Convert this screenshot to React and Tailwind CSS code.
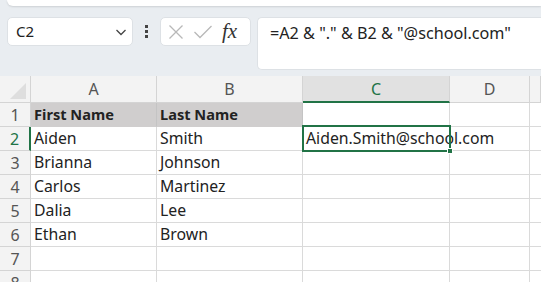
import React from "react";

const font = { fontFamily: '"Noto Sans", "Open Sans", sans-serif' };

const rows = [
  ["First Name", "Last Name", "", ""],
  ["Aiden", "Smith", "Aiden.Smith@school.com", ""],
  ["Brianna", "Johnson", "", ""],
  ["Carlos", "Martinez", "", ""],
  ["Dalia", "Lee", "", ""],
  ["Ethan", "Brown", "", ""],
  ["", "", "", ""],
  ["", "", "", ""],
];

export default function App() {
  return (
    <div className="w-[541px] h-[282px] overflow-hidden bg-white text-[#222]" style={font}>
      {/* Top toolbar area */}
      <div className="h-[76px] bg-[#e9edf1] flex flex-col">
        <div className="h-[6px] ml-[7px] bg-white rounded-bl-[6px] shadow-[0_1px_2px_rgba(0,0,0,0.12)]" />
        <div className="flex items-start mt-[11px] pl-[7px]">
          <div className="w-[126px] h-[29px] bg-white border border-[#dde1e5] rounded-[5px] flex items-center justify-between pl-[8px] pr-[4px]">
            <span className="text-[15px] text-[#222]">C2</span>
            <svg width="14" height="14" viewBox="0 0 14 14" className="mt-[1px]">
              <path d="M2.5 5 L7 9.5 L11.5 5" fill="none" stroke="#444" strokeWidth="1.3" />
            </svg>
          </div>
          <div className="w-[27px] h-[29px] flex flex-col items-center justify-center gap-[2px]">
            <div className="w-[3px] h-[3px] bg-[#444]" />
            <div className="w-[3px] h-[3px] bg-[#444]" />
            <div className="w-[3px] h-[3px] bg-[#444]" />
          </div>
          <div className="w-[91px] h-[29px] bg-white border border-[#dde1e5] rounded-[5px] flex items-center pl-[7px]">
            <svg width="16" height="16" viewBox="0 0 16 16">
              <path d="M1.5 1.5 L14.5 14.5 M14.5 1.5 L1.5 14.5" stroke="#b8b8b8" strokeWidth="1.3" fill="none" />
            </svg>
            <svg width="20" height="16" viewBox="0 0 20 16" className="ml-[9px]">
              <path d="M1.5 8 L7 13.5 L18.5 2" stroke="#b8b8b8" strokeWidth="1.3" fill="none" />
            </svg>
            <span
              className="ml-[9px] text-[21px] italic leading-none text-[#333]"
              style={{ fontFamily: '"Liberation Serif", serif' }}
            >
              fx
            </span>
          </div>
          <div className="ml-[6px] flex-1 h-[53px] bg-white border border-[#dde1e5] rounded-l-[5px] border-r-0 pl-[12px] pt-[3px]">
            <span className="text-[16.2px] text-[#222]">=A2 &amp; "." &amp; B2 &amp; "@school.com"</span>
          </div>
        </div>
      </div>

      {/* Grid */}
      <div className="grid grid-cols-[31px_126px_146px_147px_80px_11px] grid-rows-[27px_repeat(8,24px)] relative">
        {/* header row */}
        <div className="bg-[#f3f3f3] border-b border-r border-[#d4d4d4] relative overflow-hidden">
          <svg width="31" height="27" className="absolute inset-0">
            <path d="M26 7 L26 23 L10 23 Z" fill="#dedede" />
          </svg>
        </div>
        {["A", "B", "C", "D", ""].map((c, i) => (
          <div
            key={i}
            className={
              c === "C"
                ? "bg-[#e1e1e1] border-b-2 border-b-[#217346] border-r border-r-[#d4d4d4] flex items-center justify-center text-[16px] text-[#217346]"
                : "bg-[#f3f3f3] border-b border-r border-[#d4d4d4] flex items-center justify-center text-[16px] text-[#555]"
            }
          >
            {c}
          </div>
        ))}
        {rows.map((r, ri) => (
          <React.Fragment key={ri}>
            <div
              className={
                ri === 1
                  ? "bg-[#f3f3f3] border-b border-[#d4d4d4] border-r-2 border-r-[#217346] flex items-center justify-center text-[16px] text-[#217346]"
                  : "bg-[#f3f3f3] border-b border-r border-[#d4d4d4] flex items-center justify-center text-[16px] text-[#555]"
              }
            >
              {ri + 1}
            </div>
            {r.map((v, ci) => (
              <div
                key={ci}
                className={
                  (ri === 0 && ci < 2
                    ? "bg-[#d0cece] font-bold text-[14.6px] border-r border-[#c4c4c4] "
                    : "bg-white text-[15.8px] border-r border-[#dadada] ") +
                  (ri === 0 && ci < 2 ? "border-b border-b-[#d0cece] " : "border-b border-b-[#dadada] ") +
                  "flex items-center pl-[3px] text-[#222] whitespace-nowrap overflow-visible " +
                  (ri === 1 && ci === 2 ? "relative z-10 " : "")
                }
              >
                {v}
              </div>
            ))}
            <div className="bg-white border-b border-[#dadada]" />
          </React.Fragment>
        ))}
        {/* selection */}
        <div className="absolute left-[302px] top-[49px] w-[149px] h-[27px] border-2 border-[#217346] z-20 pointer-events-none">
          <div className="absolute right-[-4px] bottom-[-4px] w-[6px] h-[6px] bg-[#217346] border border-white" />
        </div>
      </div>
    </div>
  );
}
